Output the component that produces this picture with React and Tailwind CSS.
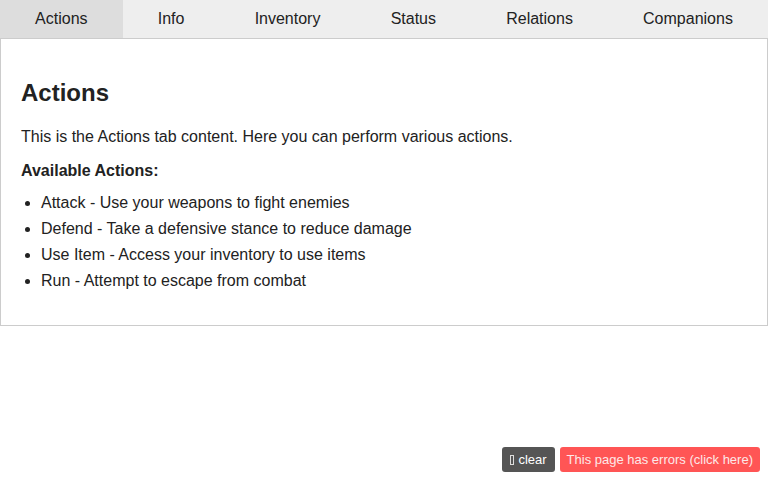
import React, { useState } from "react";

const tabs = ["Actions", "Info", "Inventory", "Status", "Relations", "Companions"];

const actions = [
    "Attack - Use your weapons to fight enemies",
    "Defend - Take a defensive stance to reduce damage",
    "Use Item - Access your inventory to use items",
    "Run - Attempt to escape from combat",
];

const App = () => {
    const [active, setActive] = useState("Actions");

    return (
        <div className="min-h-[480px] bg-white text-[#222] font-['Liberation_Sans',Arial,sans-serif]">
            {/* tab bar */}
            <div className="flex bg-[#eeeeee] border-b border-[#cccccc]">
                {tabs.map((t) => (
                    <button
                        key={t}
                        onClick={() => setActive(t)}
                        className={`flex-auto h-[38px] px-4 text-base text-[#222] ${
                            active === t ? "bg-[#dddddd]" : "bg-[#eeeeee]"
                        }`}
                    >
                        {t}
                    </button>
                ))}
            </div>

            {/* tab content */}
            <div className="border border-t-0 border-[#cccccc] px-5 pt-5 pb-[22px]">
                <h2 className="text-2xl font-bold leading-[1.15] mt-5 mb-[21px]">{active}</h2>
                <p className="text-base leading-[1.15] mb-4">
                    This is the {active} tab content. Here you can perform various actions.
                </p>
                <p className="text-base leading-[1.15] font-bold">Available Actions:</p>
                <ul className="list-disc pl-5 mt-[10px] mb-[9px]">
                    {actions.map((a) => (
                        <li key={a} className="text-base leading-[26px]">
                            {a}
                        </li>
                    ))}
                </ul>
            </div>

            {/* error overlay */}
            <div className="fixed right-2 bottom-2 flex gap-[5px] text-[13px] font-['Liberation_Sans',Arial,sans-serif]">
                <button className="flex items-center gap-1 h-[25px] px-[8px] rounded-[3px] bg-[#555555] text-white">
                    <span className="inline-block w-[4px] h-[10px] border border-white/80"></span>
                    clear
                </button>
                <button className="h-[25px] px-[7px] rounded-[3px] bg-[#ff5555] text-[#fde8e8]">
                    This page has errors (click here)
                </button>
            </div>
        </div>
    );
};

export default App;
